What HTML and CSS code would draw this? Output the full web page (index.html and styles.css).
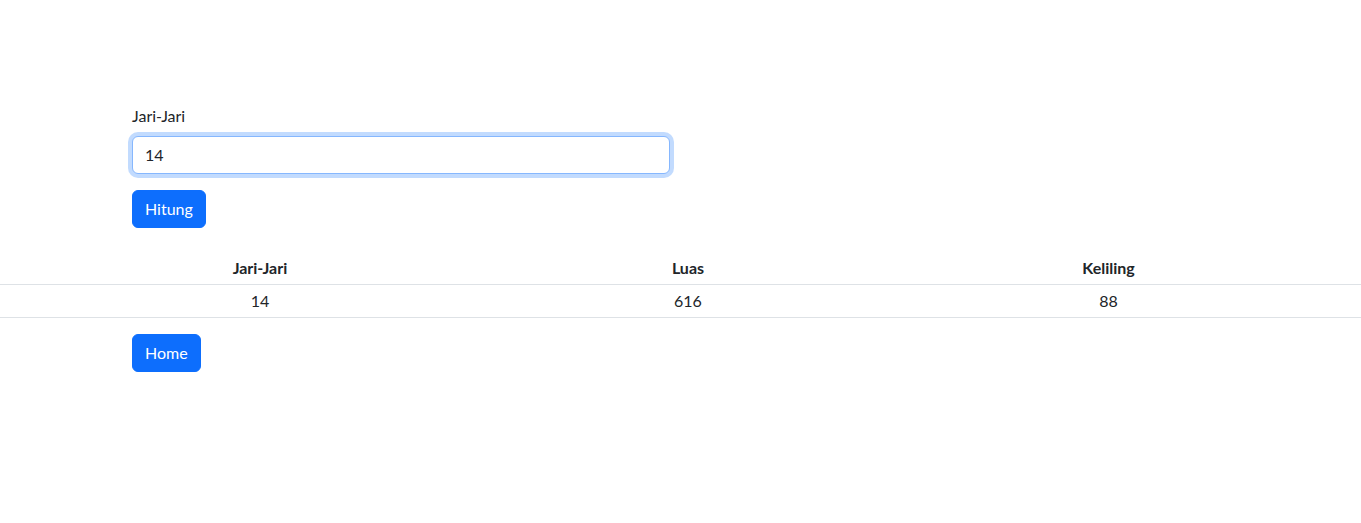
FILE: index.html
```html
<!DOCTYPE html>
<html lang="id">
<head>
  <meta charset="UTF-8">
  <meta name="viewport" content="width=device-width, initial-scale=1.0">
  <title>Lingkaran</title>
  <link rel="stylesheet" href="styles.css">
</head>
<body>
  <div class="container">
    <form class="form-hitung">
      <label for="jari" class="form-label">Jari-Jari</label>
      <input type="text" id="jari" class="form-control focus" value="14">
      <button type="button" class="btn">Hitung</button>
    </form>
  </div>

  <table class="tabel">
    <thead>
      <tr>
        <th class="col-jari">Jari-Jari</th>
        <th class="col-luas">Luas</th>
        <th class="col-keliling">Keliling</th>
      </tr>
    </thead>
    <tbody>
      <tr>
        <td>14</td>
        <td>616</td>
        <td>88</td>
      </tr>
    </tbody>
  </table>

  <div class="container">
    <a href="#" class="btn">Home</a>
  </div>
</body>
</html>
```

FILE: styles.css
```css
body {
  font-family: 'Lato', 'Noto Sans', Arial, sans-serif;
  font-size: 16px;
  line-height: 1.5;
  color: #212529;
  background: #fff;
  margin: 0;
  padding: 0;
}

.container {
  padding-left: 132px;
}

.form-hitung {
  padding-top: 104px;
  width: 538px;
}

.form-label {
  display: block;
  margin-bottom: 8px;
}

.form-control {
  display: block;
  width: 100%;
  box-sizing: border-box;
  padding: 6px 12px;
  font-family: inherit;
  font-size: 16px;
  line-height: 1.5;
  color: #212529;
  border: 1px solid #dee2e6;
  border-radius: 6px;
  margin-bottom: 16px;
  outline: none;
}

.focus {
  border-color: #86b7fe;
  box-shadow: 0 0 0 4px rgba(13, 110, 253, 0.25);
}

.btn {
  display: inline-block;
  background-color: #0d6efd;
  color: #fff;
  border: 1px solid #0d6efd;
  padding: 6px 12px;
  font-family: inherit;
  font-size: 16px;
  line-height: 1.5;
  border-radius: 6px;
  text-decoration: none;
  cursor: pointer;
}

.tabel {
  width: 100%;
  border-collapse: collapse;
  margin-top: 24px;
  margin-bottom: 16px;
}

.tabel th,
.tabel td {
  padding: 4px;
  text-align: center;
  border-bottom: 1px solid #dee2e6;
}

.tabel th {
  font-weight: bold;
}

.col-jari {
  width: 38.2%;
}

.col-luas {
  width: 24.7%;
}
```
